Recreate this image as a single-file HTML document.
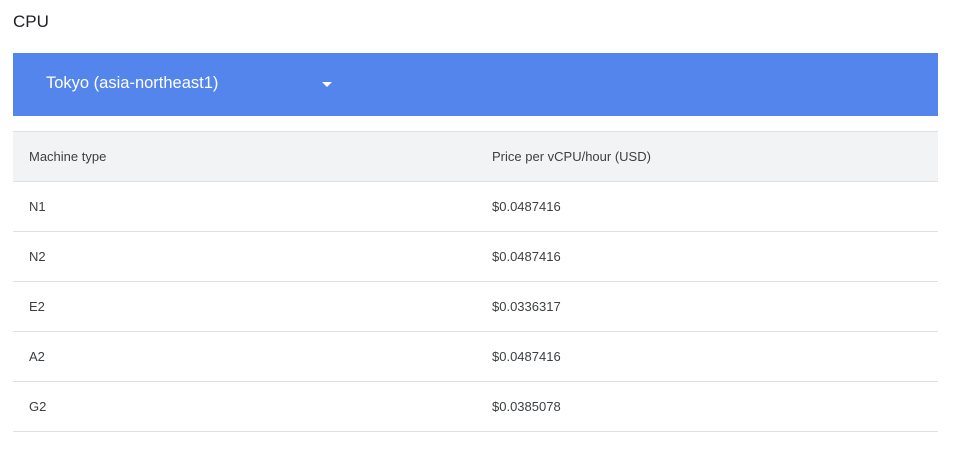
<html><head><style>
body{margin:0;background:#fff;font-family:"Liberation Sans",sans-serif;width:960px;height:459px;overflow:hidden;position:relative}
.t{position:absolute;left:13px;top:12px;font-size:17px;color:#202124}
.bar{position:absolute;left:13px;top:53px;width:925px;height:63px;background:#5485ec}
.bar span{position:absolute;left:33px;top:21px;color:#fff;font-size:16.5px}
.arr{position:absolute;left:309px;top:29px;width:0;height:0;border-left:5px solid transparent;border-right:5px solid transparent;border-top:5px solid #fff}
.row{position:absolute;left:13px;width:925px;height:49px;border-bottom:1px solid #e0e0e0;font-size:13px;color:#3c4043}
.row span{position:absolute;top:17px}
.h{background:#f1f3f4;border-top:1px solid #e0e0e0;color:#3c4043;font-weight:500}
</style></head><body>
<div class="t">CPU</div>
<div class="bar"><span>Tokyo (asia-northeast1)</span><div class="arr"></div></div>
<div class="row h" style="top:131px;height:49px"><span style="left:16px">Machine type</span><span style="left:479px">Price per vCPU/hour (USD)</span></div>
<div class="row" style="top:182px"><span style="left:16px">N1</span><span style="left:479px">$0.0487416</span></div>
<div class="row" style="top:232px"><span style="left:16px">N2</span><span style="left:479px">$0.0487416</span></div>
<div class="row" style="top:282px"><span style="left:16px">E2</span><span style="left:479px">$0.0336317</span></div>
<div class="row" style="top:332px"><span style="left:16px">A2</span><span style="left:479px">$0.0487416</span></div>
<div class="row" style="top:382px"><span style="left:16px">G2</span><span style="left:479px">$0.0385078</span></div>
</body></html>
